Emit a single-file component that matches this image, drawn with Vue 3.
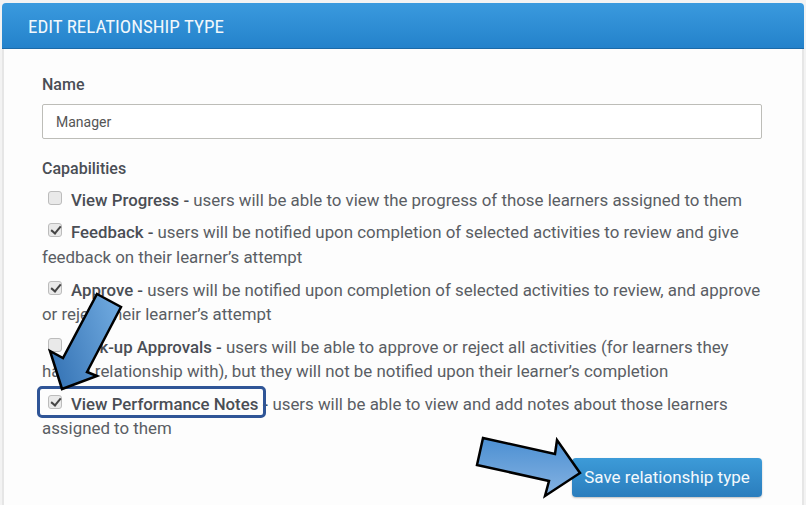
<script setup>
const capabilities = [
  { name: 'View Progress -', text: ' users will be able to view the progress of those learners assigned to them', checked: false },
  { name: 'Feedback -', text: ' users will be notified upon completion of selected activities to review and give feedback on their learner’s attempt', checked: true },
  { name: 'Approve -', text: ' users will be notified upon completion of selected activities to review, and approve or reject their learner’s attempt', checked: true },
  { name: 'Back-up Approvals -', text: ' users will be able to approve or reject all activities (for learners they have a relationship with), but they will not be notified upon their learner’s completion', checked: false },
  { name: 'View Performance Notes -', text: ' users will be able to view and add notes about those learners assigned to them', checked: true }
]
</script>

<template>
  <div class="page">
    <div class="panel">
      <div class="panel-head">EDIT RELATIONSHIP TYPE</div>
      <div class="panel-body">
        <label class="field-label">Name</label>
        <input class="name-input" type="text" value="Manager" />
        <div class="field-label caps-label">Capabilities</div>
        <div class="cap-list">
          <div v-for="cap in capabilities" :key="cap.name" class="cap">
            <input class="cap-check" type="checkbox" :checked="cap.checked" />
            <strong>{{ cap.name }}</strong>{{ cap.text }}
          </div>
        </div>
        <div class="actions">
          <button class="save-btn" type="button">Save relationship type</button>
        </div>
      </div>
    </div>

    <div class="highlight"></div>
    <svg class="arrows" width="806" height="505" viewBox="0 0 806 505">
      <defs>
        <linearGradient id="arrowDown" x1="0" y1="0.7" x2="1" y2="0.3">
          <stop offset="0" stop-color="#3775b6" />
          <stop offset="1" stop-color="#6ea8de" />
        </linearGradient>
        <linearGradient id="arrowRight" x1="0" y1="0" x2="0" y2="1">
          <stop offset="0" stop-color="#4b8fd2" />
          <stop offset="1" stop-color="#86b3e2" />
        </linearGradient>
      </defs>
      <polygon points="97,294 121,307 87,372 97,376 62,389 50,351 63,358" fill="url(#arrowDown)" stroke="#000" stroke-width="2.5" stroke-linejoin="miter" />
      <polygon points="483,438 555,454 557,440 580,473 545,496 549,481 477,465" fill="url(#arrowRight)" stroke="#000" stroke-width="2.5" stroke-linejoin="miter" />
    </svg>
  </div>
</template>

<style scoped>
.page {
  position: relative;
  width: 806px;
  height: 505px;
  overflow: hidden;
  padding: 3px 2px 0;
  box-sizing: border-box;
  background: #f3f3f3;
  font-family: Roboto, "Liberation Sans", sans-serif;
  color: #4f5359;
}

.panel {
  height: 502px;
  background: #fdfdfd;
  border-radius: 4px 4px 0 0;
  display: flex;
  flex-direction: column;
}

.panel-head {
  height: 46px;
  box-sizing: border-box;
  padding: 12px 0 0 26px;
  background: linear-gradient(#3a9ade, #2482cb);
  border-bottom: 1px solid #1c6aa8;
  border-radius: 4px 4px 0 0;
  color: #f2f8fc;
  font-size: 19px;
  font-stretch: condensed;
  line-height: 24px;
}

.panel-body {
  flex: 1;
  padding: 26px 38px 0;
  border-left: 2px solid #e6e6e6;
  border-right: 2px solid #e6e6e6;
}

.field-label {
  display: block;
  font-size: 16px;
  line-height: 20px;
  font-weight: 500;
  color: #4a4e55;
}

.name-input {
  display: block;
  width: 720px;
  height: 35px;
  box-sizing: border-box;
  margin-top: 9px;
  padding: 0 13px;
  border: 1px solid #bdbdb8;
  border-radius: 2px;
  background: #fff;
  color: #555;
  font-family: inherit;
  font-size: 14px;
}

.caps-label {
  margin-top: 20px;
}

.cap-list {
  display: flex;
  flex-direction: column;
  gap: 8.4px;
  margin-top: 8.5px;
}

.cap {
  width: 722px;
  font-size: 16.88px;
  line-height: 24.4px;
  color: #5a5e64;
}

.cap strong {
  font-size: 16.8px;
  font-weight: 500;
  color: #4a4e55;
}

.cap-check {
  appearance: none;
  position: relative;
  display: inline-block;
  width: 14px;
  height: 14px;
  margin: 0 9px 0 6px;
  vertical-align: 1px;
  border: 1px solid #bcbcbc;
  border-radius: 3px;
  background: #e9e9e9;
}

.cap-check:checked::after {
  content: "";
  position: absolute;
  left: 4px;
  top: 0;
  width: 4px;
  height: 8px;
  border: solid #444;
  border-width: 0 2px 2px 0;
  transform: rotate(40deg);
}

.actions {
  display: flex;
  justify-content: flex-end;
  width: 724px;
  margin-top: 17px;
}

.save-btn {
  width: 190px;
  height: 39px;
  margin-right: 4px;
  padding: 0;
  border: 0;
  border-radius: 4px;
  background: linear-gradient(#3d9bd8, #2a7dbd);
  box-shadow: 0 1px 2px rgba(0, 0, 0, 0.25);
  color: #f4f9fc;
  font-family: inherit;
  font-size: 17px;
}

.highlight {
  position: absolute;
  left: 37px;
  top: 386px;
  width: 229px;
  height: 32px;
  box-sizing: border-box;
  border: 3.5px solid #2f5597;
  border-radius: 5px;
}

.arrows {
  position: absolute;
  left: 0;
  top: 0;
}
</style>
